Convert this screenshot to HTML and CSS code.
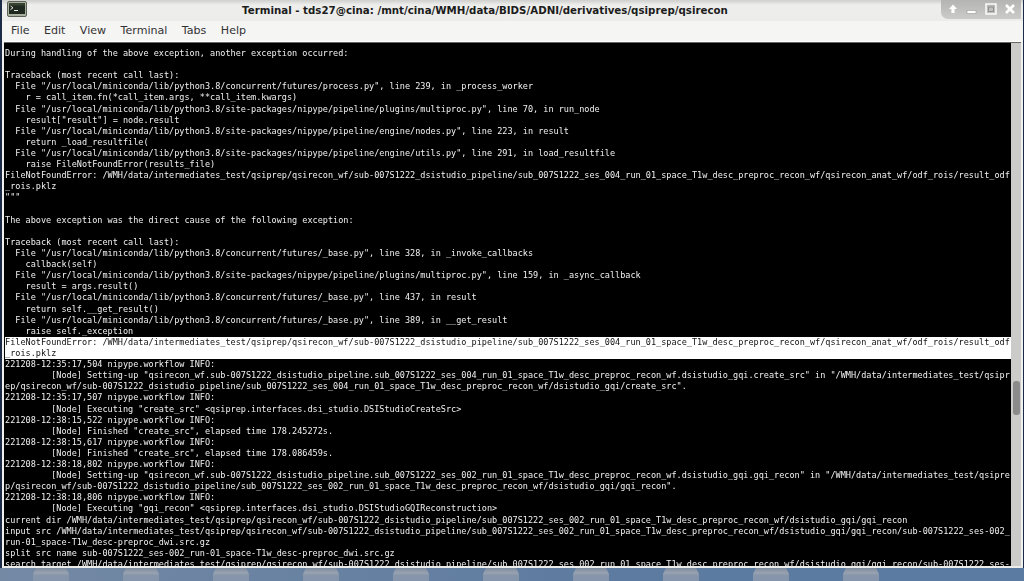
FILE: index.html
```html
<!DOCTYPE html>
<html lang="en">
<head>
<meta charset="utf-8">
<title>Terminal</title>
<link rel="stylesheet" href="styles.css">
</head>
<body>
<div class="window">
  <header class="titlebar">
    <svg class="app-icon" width="20" height="16" viewBox="0 0 20 16">
      <rect x="0.5" y="0.5" width="19" height="15" rx="1.5" fill="#a9b09f" stroke="#5c6156"/>
      <rect x="2" y="2" width="16" height="11" fill="#20291f"/>
      <path d="M3.5 5l2.5 1.8-2.5 1.8" fill="none" stroke="#e8e8e0" stroke-width="1"/>
      <path d="M7 9.5h4" stroke="#e8e8e0" stroke-width="1"/>
      <path d="M2 2h16v2.5H2z" fill="#48533f" opacity=".6"/>
    </svg>
    <div class="title">Terminal - tds27@cina: /mnt/cina/WMH/data/BIDS/ADNI/derivatives/qsiprep/qsirecon</div>
    <div class="controls">
      <svg width="12" height="12" viewBox="0 0 12 12"><path d="M6 1.5l4 4.5H7.6v4H4.4V6H2z" fill="#fff"/></svg>
      <svg width="12" height="12" viewBox="0 0 12 12"><rect x="1" y="7.5" width="9" height="3" fill="#fff" stroke="#9a9a9a" stroke-width=".6"/></svg>
      <svg width="12" height="12" viewBox="0 0 12 12"><rect x="1" y="1" width="10" height="10" fill="none" stroke="#fff" stroke-width="1.4"/><rect x="3.5" y="4" width="5" height="4.5" fill="none" stroke="#8f8f8f"/></svg>
      <svg width="12" height="12" viewBox="0 0 12 12"><path d="M2 2l8 8M10 2l-8 8" stroke="#fff" stroke-width="2.6"/></svg>
    </div>
  </header>
  <nav class="menubar">
    <span class="menu-item">File</span>
    <span class="menu-item">Edit</span>
    <span class="menu-item">View</span>
    <span class="menu-item">Terminal</span>
    <span class="menu-item">Tabs</span>
    <span class="menu-item">Help</span>
  </nav>
  <main class="term-row">
    <pre class="term">During handling of the above exception, another exception occurred:

Traceback (most recent call last):
  File "/usr/local/miniconda/lib/python3.8/concurrent/futures/process.py", line 239, in _process_worker
    r = call_item.fn(*call_item.args, **call_item.kwargs)
  File "/usr/local/miniconda/lib/python3.8/site-packages/nipype/pipeline/plugins/multiproc.py", line 70, in run_node
    result["result"] = node.result
  File "/usr/local/miniconda/lib/python3.8/site-packages/nipype/pipeline/engine/nodes.py", line 223, in result
    return _load_resultfile(
  File "/usr/local/miniconda/lib/python3.8/site-packages/nipype/pipeline/engine/utils.py", line 291, in load_resultfile
    raise FileNotFoundError(results_file)
FileNotFoundError: /WMH/data/intermediates_test/qsiprep/qsirecon_wf/sub-007S1222_dsistudio_pipeline/sub_007S1222_ses_004_run_01_space_T1w_desc_preproc_recon_wf/qsirecon_anat_wf/odf_rois/result_odf
_rois.pklz
"""

The above exception was the direct cause of the following exception:

Traceback (most recent call last):
  File "/usr/local/miniconda/lib/python3.8/concurrent/futures/_base.py", line 328, in _invoke_callbacks
    callback(self)
  File "/usr/local/miniconda/lib/python3.8/site-packages/nipype/pipeline/plugins/multiproc.py", line 159, in _async_callback
    result = args.result()
  File "/usr/local/miniconda/lib/python3.8/concurrent/futures/_base.py", line 437, in result
    return self.__get_result()
  File "/usr/local/miniconda/lib/python3.8/concurrent/futures/_base.py", line 389, in __get_result
    raise self._exception
<span class="hl">FileNotFoundError: /WMH/data/intermediates_test/qsiprep/qsirecon_wf/sub-007S1222_dsistudio_pipeline/sub_007S1222_ses_004_run_01_space_T1w_desc_preproc_recon_wf/qsirecon_anat_wf/odf_rois/result_odf
_rois.pklz</span>221208-12:35:17,504 nipype.workflow INFO:
         [Node] Setting-up "qsirecon_wf.sub-007S1222_dsistudio_pipeline.sub_007S1222_ses_004_run_01_space_T1w_desc_preproc_recon_wf.dsistudio_gqi.create_src" in "/WMH/data/intermediates_test/qsipr
ep/qsirecon_wf/sub-007S1222_dsistudio_pipeline/sub_007S1222_ses_004_run_01_space_T1w_desc_preproc_recon_wf/dsistudio_gqi/create_src".
221208-12:35:17,507 nipype.workflow INFO:
         [Node] Executing "create_src" &lt;qsiprep.interfaces.dsi_studio.DSIStudioCreateSrc&gt;
221208-12:38:15,522 nipype.workflow INFO:
         [Node] Finished "create_src", elapsed time 178.245272s.
221208-12:38:15,617 nipype.workflow INFO:
         [Node] Finished "create_src", elapsed time 178.086459s.
221208-12:38:18,802 nipype.workflow INFO:
         [Node] Setting-up "qsirecon_wf.sub-007S1222_dsistudio_pipeline.sub_007S1222_ses_002_run_01_space_T1w_desc_preproc_recon_wf.dsistudio_gqi.gqi_recon" in "/WMH/data/intermediates_test/qsipre
p/qsirecon_wf/sub-007S1222_dsistudio_pipeline/sub_007S1222_ses_002_run_01_space_T1w_desc_preproc_recon_wf/dsistudio_gqi/gqi_recon".
221208-12:38:18,806 nipype.workflow INFO:
         [Node] Executing "gqi_recon" &lt;qsiprep.interfaces.dsi_studio.DSIStudioGQIReconstruction&gt;
current dir /WMH/data/intermediates_test/qsiprep/qsirecon_wf/sub-007S1222_dsistudio_pipeline/sub_007S1222_ses_002_run_01_space_T1w_desc_preproc_recon_wf/dsistudio_gqi/gqi_recon
input src /WMH/data/intermediates_test/qsiprep/qsirecon_wf/sub-007S1222_dsistudio_pipeline/sub_007S1222_ses_002_run_01_space_T1w_desc_preproc_recon_wf/dsistudio_gqi/gqi_recon/sub-007S1222_ses-002_
run-01_space-T1w_desc-preproc_dwi.src.gz
split src name sub-007S1222_ses-002_run-01_space-T1w_desc-preproc_dwi.src.gz
search target /WMH/data/intermediates_test/qsiprep/qsirecon_wf/sub-007S1222_dsistudio_pipeline/sub_007S1222_ses_002_run_01_space_T1w_desc_preproc_recon_wf/dsistudio_gqi/gqi_recon/sub-007S1222_ses-</pre>
    <div class="scrollbar"><div class="thumb"></div></div>
  </main>
</div>
<footer class="desktop">
  <span class="launcher"></span><span class="launcher"></span><span class="launcher"></span><span class="launcher"></span><span class="launcher"></span><span class="launcher"></span><span class="launcher"></span><span class="launcher"></span><span class="launcher"></span><span class="launcher"></span>
</footer>
</body>
</html>
```
FILE: styles.css
```css
* { box-sizing: border-box; }
html, body { margin: 0; height: 581px; overflow: hidden; }
body {
  width: 1024px;
  display: flex;
  flex-direction: column;
  background: #1c2c48;
}
.window {
  height: 568px;
  margin: 0 1px 0 2px;
  display: flex;
  flex-direction: column;
  background: #f1f1ef;
  border-bottom: 2px solid #ececea;
}
.titlebar {
  height: 21px;
  flex: none;
  display: flex;
  align-items: flex-start;
  position: relative;
  background: linear-gradient(#cfcfcd 0, #eeeeec 5px, #ececea 100%);
}
.app-icon { margin: 1px 0 0 5px; flex: none; }
.title {
  flex: 1;
  text-align: center;
  padding: 3px 80px 0 0;
  font: bold 10.25px/14px "DejaVu Sans", sans-serif;
  color: #1c1c1c;
  white-space: nowrap;
}
.controls {
  position: absolute;
  top: 0;
  right: 2px;
  width: 80px;
  height: 19px;
  padding: 3px 5px 0 6px;
  display: flex;
  justify-content: space-between;
  background: linear-gradient(#b4b4b2, #cbcbc9);
  border-radius: 0 0 0 7px;
}
.menubar {
  height: 20px;
  flex: none;
  display: flex;
  padding: 1px 0 0 9px;
  gap: 14.4px;
  font: 11.1px/18px "DejaVu Sans", sans-serif;
  color: #333;
  background: #f5f5f3;
}
.term-row {
  flex: 1;
  min-height: 0;
  display: flex;
  margin: 0 2px 0 2px;
  padding-top: 1px;
  border-top: 1px solid #fff;
  box-shadow: inset 0 1px 0 #666;
}
.term {
  width: 1007px;
  flex: none;
  margin: 0;
  padding: 5px 0 0 1px;
  overflow: hidden;
  background: #000;
  color: #f0f0f0;
  font: 8.53px/11.11px "DejaVu Sans Mono", monospace;
  filter: blur(0.3px);
}
.hl {
  display: block;
  background: #fff;
  color: #111;
}
.scrollbar {
  flex: 1;
  padding: 338px 1px 0 2px;
  background: #cbcbc9;
}
.thumb {
  height: 34px;
  width: 7px;
  border-radius: 3px;
  background: #8b8b8b;
}
.desktop {
  flex: 1;
  display: flex;
  gap: 54px;
  padding: 0 0 0 33px;
  background: linear-gradient(90deg, #7489a4, #5d7ba0 60%, #5b7ba3);
}
.launcher {
  width: 36px;
  height: 13px;
  clip-path: polygon(3px 0, 33px 0, 36px 6px, 36px 100%, 0 100%, 0 6px);
  background: linear-gradient(#7f8c9f 0, #98a3b2 5px, #8896aa 7px, #8494aa 100%);
}
```
